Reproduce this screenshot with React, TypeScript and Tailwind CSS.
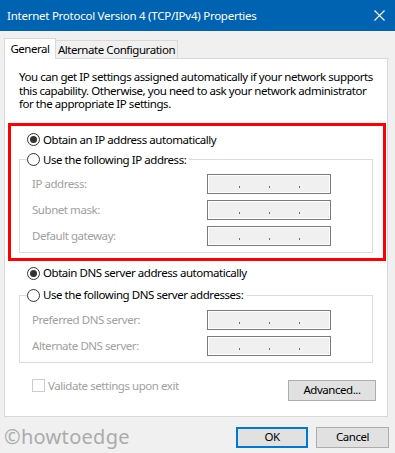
const font = { fontFamily: '"Noto Sans", "Open Sans", sans-serif' };

const Radio = ({ checked, label }: { checked?: boolean; label: string }) => (
  <div className="flex items-center h-[16px] bg-white pr-[3px] whitespace-nowrap">
    <div className="w-[13px] h-[13px] rounded-full border border-[#333] bg-white flex items-center justify-center">
      {checked && <div className="w-[7px] h-[7px] rounded-full bg-[#333]" />}
    </div>
    <span className="ml-[3px] text-[#000]">{label}</span>
  </div>
);

const IpBox = () => (
  <div className="w-[124px] h-[20px] border border-[#7a7a7a] bg-[#f0f0f0] shadow-[inset_0_0_0_1px_#fff] flex items-end pb-[5px] pl-[31px] gap-[29px]">
    <div className="w-[1px] h-[2px] bg-[#6a6a8a]" />
    <div className="w-[1px] h-[2px] bg-[#6a6a8a]" />
    <div className="w-[1px] h-[2px] bg-[#6a6a8a]" />
  </div>
);

const Field = ({ label }: { label: string }) => (
  <div className="flex items-center h-[20px]">
    <span className="w-[175px] text-[#a0a0a0] whitespace-nowrap">{label}</span>
    <IpBox />
  </div>
);

const Group = ({ legend, fields }: { legend: string; fields: string[] }) => (
  <fieldset className="mx-[14px] border border-[#dcdcdc] p-0">
    <legend className="ml-[7px] p-0">
      <Radio label={legend} />
    </legend>
    <div className="flex flex-col gap-[6px] pt-[6.5px] pb-[6px] px-[12px]">
      {fields.map((f) => (
        <Field key={f} label={f} />
      ))}
    </div>
  </fieldset>
);

export default function App() {
  return (
    <div
      className="w-[395px] h-[453px] bg-[#f0f0f0] text-[11.5px] tracking-[-0.45px] leading-[16px] text-black overflow-hidden"
      style={font}
    >
      <div className="h-[31px] bg-[#0063b1] flex items-center justify-between pl-[7px] pr-[9px] text-white tracking-[-0.25px]">
        <span className="whitespace-nowrap">Internet Protocol Version 4 (TCP/IPv4) Properties</span>
        <svg width="11" height="11" viewBox="0 0 11 11" className="mr-[1px]">
          <path d="M0.5 0.5L10.5 10.5M10.5 0.5L0.5 10.5" stroke="#fff" strokeWidth="1.1" />
        </svg>
      </div>

      <div className="flex items-end pl-[4px] h-[27px] whitespace-nowrap">
        <div className="relative z-10 h-[21px] w-[52px] bg-white border border-b-0 border-[#d9d9d9] flex items-center justify-center -mb-[1px]">
          General
        </div>
        <div className="h-[18px] w-[122px] bg-[#f0f0f0] border border-b-0 border-l-0 border-[#d9d9d9] flex items-center justify-center">
          Alternate Configuration
        </div>
      </div>

      <div className="relative ml-[4px] w-[384px] h-[359px] bg-white border border-[#d9d9d9] flex flex-col">
        <p className="pl-[14px] mt-[11px] leading-[13.5px] whitespace-nowrap">
          You can get IP settings assigned automatically if your network supports
          <br />
          this capability. Otherwise, you need to ask your network administrator
          <br />
          for the appropriate IP settings.
        </p>

        <div className="mt-[21px] ml-[22px]">
          <Radio checked label="Obtain an IP address automatically" />
        </div>
        <div className="mt-[4px]">
          <Group legend="Use the following IP address:" fields={["IP address:", "Subnet mask:", "Default gateway:"]} />
        </div>

        <div className="mt-[12px] ml-[22px]">
          <Radio checked label="Obtain DNS server address automatically" />
        </div>
        <div className="mt-[6px]">
          <Group legend="Use the following DNS server addresses:" fields={["Preferred DNS server:", "Alternate DNS server:"]} />
        </div>

        <div className="flex items-start justify-between mt-[16px] pl-[27px] pr-[11px]">
          <div className="flex items-center h-[14px]">
            <div className="w-[13px] h-[13px] border border-[#cccccc] bg-white" />
            <span className="ml-[3px] text-[#a0a0a0] whitespace-nowrap">Validate settings upon exit</span>
          </div>
          <button className="mt-[1px] w-[88px] h-[21px] bg-[#e1e1e1] border border-[#adadad] flex items-center justify-center">
            Advanced...
          </button>
        </div>

        <div className="absolute left-[3px] top-[64px] w-[378px] h-[138px] border-[3px] border-[#ff0000] pointer-events-none" />
      </div>

      <div className="flex items-center mt-[8px] pl-[4px] pr-[6px]">
        <span className="text-[20px] leading-[24px] text-[#ababab] tracking-[0.3px]">©howtoedge</span>
        <button className="ml-auto w-[72px] h-[21px] bg-[#e1e1e1] border-2 border-[#0078d7] flex items-center justify-center">
          OK
        </button>
        <button className="ml-[8px] w-[73px] h-[21px] bg-[#e1e1e1] border border-[#adadad] flex items-center justify-center">
          Cancel
        </button>
      </div>
    </div>
  );
}
